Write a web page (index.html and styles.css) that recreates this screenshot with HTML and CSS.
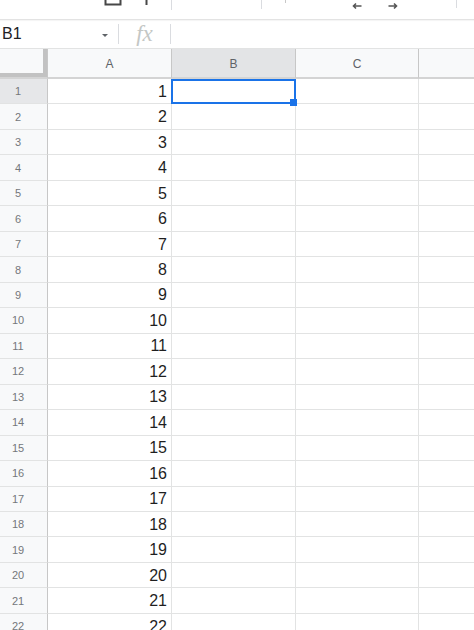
FILE: index.html
```html
<!DOCTYPE html>
<html>
<head>
<meta charset="utf-8">
<link rel="stylesheet" href="styles.css">
</head>
<body>
<div class="toolbar">
  <svg class="ic print" width="18" height="6" viewBox="0 0 18 6"><path d="M1.5 0V4.5H16.5V0" fill="none" stroke="#474747" stroke-width="2"/></svg>
  <svg class="ic paint" width="3" height="5" viewBox="0 0 3 5"><rect x="0.5" y="0" width="2" height="5" fill="#474747"/></svg>
  <span class="tsep s1"></span>
  <span class="tsep s2"></span>
  <span class="tick"></span>
  <svg class="ic arr1" width="10" height="11" viewBox="0 0 10 11"><path d="M9.5 6H1.5M4 3.5L1.5 6L4 8.5" fill="none" stroke="#555" stroke-width="1.6"/></svg>
  <svg class="ic arr2" width="10" height="11" viewBox="0 0 10 11"><path d="M0.5 6H8.5M6 3.5L8.5 6L6 8.5" fill="none" stroke="#555" stroke-width="1.6"/></svg>
  <span class="tsep s3"></span>
</div>
<div class="fbar">
  <div class="namebox"><span class="ref">B1</span><span class="caret"></span></div>
  <span class="fsep"></span>
  <div class="fx">fx</div>
  <span class="fsep"></span>
  <div class="finput"></div>
</div>
<div class="sheet">
  <div class="corner"><div class="corner-in"></div></div>
  <div class="ch">A</div><div class="ch selh">B</div><div class="ch">C</div><div class="ch last"></div>

  <div class="rh selh">1</div><div class="c">1</div><div class="c sel"></div><div class="c"></div><div class="c last"></div>
  <div class="rh">2</div><div class="c">2</div><div class="c"></div><div class="c"></div><div class="c last"></div>
  <div class="rh">3</div><div class="c">3</div><div class="c"></div><div class="c"></div><div class="c last"></div>
  <div class="rh">4</div><div class="c">4</div><div class="c"></div><div class="c"></div><div class="c last"></div>
  <div class="rh">5</div><div class="c">5</div><div class="c"></div><div class="c"></div><div class="c last"></div>
  <div class="rh">6</div><div class="c">6</div><div class="c"></div><div class="c"></div><div class="c last"></div>
  <div class="rh">7</div><div class="c">7</div><div class="c"></div><div class="c"></div><div class="c last"></div>
  <div class="rh">8</div><div class="c">8</div><div class="c"></div><div class="c"></div><div class="c last"></div>
  <div class="rh">9</div><div class="c">9</div><div class="c"></div><div class="c"></div><div class="c last"></div>
  <div class="rh">10</div><div class="c">10</div><div class="c"></div><div class="c"></div><div class="c last"></div>
  <div class="rh">11</div><div class="c">11</div><div class="c"></div><div class="c"></div><div class="c last"></div>
  <div class="rh">12</div><div class="c">12</div><div class="c"></div><div class="c"></div><div class="c last"></div>
  <div class="rh">13</div><div class="c">13</div><div class="c"></div><div class="c"></div><div class="c last"></div>
  <div class="rh">14</div><div class="c">14</div><div class="c"></div><div class="c"></div><div class="c last"></div>
  <div class="rh">15</div><div class="c">15</div><div class="c"></div><div class="c"></div><div class="c last"></div>
  <div class="rh">16</div><div class="c">16</div><div class="c"></div><div class="c"></div><div class="c last"></div>
  <div class="rh">17</div><div class="c">17</div><div class="c"></div><div class="c"></div><div class="c last"></div>
  <div class="rh">18</div><div class="c">18</div><div class="c"></div><div class="c"></div><div class="c last"></div>
  <div class="rh">19</div><div class="c">19</div><div class="c"></div><div class="c"></div><div class="c last"></div>
  <div class="rh">20</div><div class="c">20</div><div class="c"></div><div class="c"></div><div class="c last"></div>
  <div class="rh">21</div><div class="c">21</div><div class="c"></div><div class="c"></div><div class="c last"></div>
  <div class="rh">22</div><div class="c">22</div><div class="c"></div><div class="c"></div><div class="c last"></div>
</div>
</body>
</html>
```
FILE: styles.css
```css
html, body {
  margin: 0;
  padding: 0;
  background: #fff;
  overflow: hidden;
  height: 630px;
  font-family: "Liberation Sans", Arial, sans-serif;
}

.toolbar {
  display: flex;
  align-items: flex-start;
  height: 19px;
  border-bottom: 1px solid #e3e3e3;
  box-shadow: 0 1px 1px rgba(0,0,0,0.04);
}
.ic { display: block; flex: none; }
.print { margin-left: 104px; }
.paint { margin-left: 23px; }
.tsep { display: block; width: 1px; background: #dadce0; flex: none; }
.s1 { margin-left: 23px; height: 10px; }
.s2 { margin-left: 89px; height: 9px; }
.tick { display: block; width: 1px; height: 3px; background: #c8c8c8; margin-left: 23px; }
.arr1 { margin-left: 66px; }
.arr2 { margin-left: 26px; }
.s3 { margin-left: 58px; height: 8px; }

.fbar {
  display: flex;
  align-items: center;
  height: 28px;
  border-bottom: 1px solid #e2e3e3;
}
.namebox {
  width: 118px;
  box-sizing: border-box;
  display: flex;
  align-items: center;
  justify-content: space-between;
  padding: 0 10px 0 2px;
  font-size: 16px;
  color: #202124;
}
.ref { line-height: 20px; }
.caret {
  width: 0; height: 0;
  border-left: 3px solid transparent;
  border-right: 3px solid transparent;
  border-top: 3px solid #5f6368;
  margin-top: 2px;
}
.fsep { display: block; width: 1px; height: 20px; background: #dadce0; flex: none; }
.fx {
  width: 51px;
  text-align: center;
  font-family: "Liberation Serif", "Times New Roman", serif;
  font-style: italic;
  font-size: 23px;
  color: #c4c7c5;
  line-height: 24px;
}
.finput { flex: 1; }

.sheet {
  display: grid;
  grid-template-columns: 48px 124px 124px 123px 1fr;
  grid-template-rows: 30px;
  grid-auto-rows: 25.476px;
}
.corner {
  background: #f8f9fa;
  border-right: 1px solid #c7c7c7;
  border-bottom: 2px solid #d4d4d4;
  box-sizing: border-box;
}
.corner-in {
  width: 47px;
  height: 28px;
  box-sizing: border-box;
  border-right: 4px solid #c2c2c2;
  border-bottom: 4px solid #c2c2c2;
}
.ch {
  background: #f8f9fa;
  border-right: 1px solid #c7c7c7;
  border-bottom: 2px solid #d4d4d4;
  box-sizing: border-box;
  display: flex;
  align-items: center;
  justify-content: center;
  font-size: 12px;
  color: #5f6368;
  padding-top: 1px;
}
.ch.selh { background: #e3e4e6; }
.rh {
  background: #f8f9fa;
  border-right: 1px solid #c7c7c7;
  border-bottom: 1px solid #e2e3e3;
  box-sizing: border-box;
  display: flex;
  align-items: center;
  justify-content: center;
  padding-right: 11px;
  font-size: 11px;
  color: #74777a;
}
.rh.selh { background: #e6e7e9; }
.c {
  border-right: 1px solid #e2e3e3;
  border-bottom: 1px solid #e2e3e3;
  box-sizing: border-box;
  display: flex;
  align-items: center;
  justify-content: flex-end;
  padding: 1px 4px 0 0;
  font-size: 16px;
  color: #1f1f1f;
  position: relative;
}
.last { border-right: none; }
.c.sel::after {
  content: "";
  position: absolute;
  top: 0;
  left: -1px;
  right: -1px;
  bottom: -1px;
  border: 2px solid #1a73e8;
  pointer-events: none;
}
.c.sel::before {
  content: "";
  position: absolute;
  width: 7px;
  height: 7px;
  right: -2px;
  bottom: -3px;
  background: #1a73e8;
  z-index: 2;
}
```
